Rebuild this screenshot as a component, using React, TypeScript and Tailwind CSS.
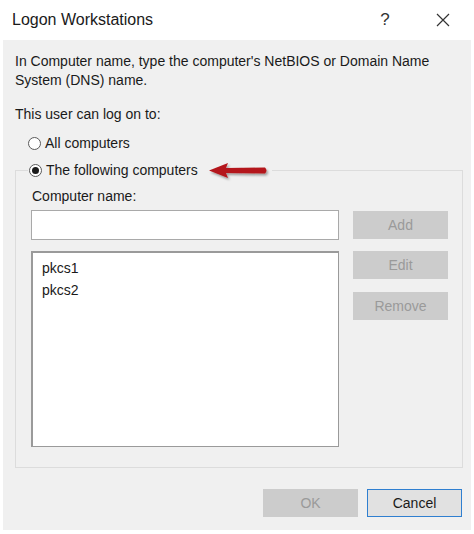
import React from "react";

const font = { fontFamily: '"Liberation Sans", Arial, sans-serif' };

function Radio({ checked }: { checked?: boolean }) {
  return (
    <span className="inline-flex w-[13px] h-[13px] rounded-full border border-[#5a5a5a] bg-white items-center justify-center mr-[4px] shrink-0">
      {checked && <span className="w-[7px] h-[7px] rounded-full bg-[#1a1a1a]" />}
    </span>
  );
}

function Btn({ children, className = "" }: { children: React.ReactNode; className?: string }) {
  return (
    <div
      className={
        "h-[28px] w-[95px] flex items-center justify-center bg-[#cccccc] text-[#9a9a9a] text-[14px] " + className
      }
    >
      {children}
    </div>
  );
}

export default function App() {
  return (
    <div className="w-[474px] h-[534px] bg-white text-[#1a1a1a] overflow-hidden" style={font}>
      <div className="h-[40px] flex items-center pl-[12px] pr-[20px] text-[16px] text-[#1a1a1a]">
        <span className="flex-1">Logon Workstations</span>
        <span className="w-[20px] text-center text-[17px] mr-[41px] text-[#333]">?</span>
        <svg width="14" height="14" viewBox="0 0 14 14" className="mr-[4px]">
          <path d="M1 1 L13 13 M13 1 L1 13" stroke="#333" strokeWidth="1.2" fill="none" />
        </svg>
      </div>
      <div className="mx-[3px] h-[490px] bg-[#f0f0f0] pl-[12px] pr-[9px] pt-[12px] text-[14px] leading-[19px]">
        <p>
          In Computer name, type the computer's NetBIOS or Domain Name
          <br />
          System (DNS) name.
        </p>
        <p className="mt-[15px]">This user can log on to:</p>
        <div className="mt-[10px] flex items-center pl-[13px]">
          <Radio />
          <span>All computers</span>
        </div>
        <fieldset className="mt-[5px] border border-[#dcdcdc] pl-[15px] pr-[14px] pb-[20px] h-[310px]">
          <legend className="ml-[-3px] px-[1px] flex items-center">
            <Radio checked />
            <span>The following computers</span>
            <svg width="64" height="22" viewBox="0 0 64 22" className="ml-[9px] mt-[3px]">
              <defs>
                <filter id="sh" x="-20%" y="-40%" width="140%" height="180%">
                  <feDropShadow dx="1.5" dy="2" stdDeviation="1.3" floodColor="#000" floodOpacity="0.35" />
                </filter>
              </defs>
              <path
                d="M2 9.5 L21 2 L19 7 L58 6.5 Q61 9.5 58 12.5 L19 12 L21 17 Z"
                fill="#b4191c"
                filter="url(#sh)"
              />
            </svg>
          </legend>
          <div className="mt-[4px] pl-[1px]">Computer name:</div>
          <div className="mt-[4px] flex gap-[14px]">
            <div className="flex flex-col gap-[11px]">
              <div className="w-[308px] h-[30px] bg-white border border-[#a9a9a9]" />
              <div className="w-[308px] h-[196px] bg-white border border-[#9a9a9a] border-t-2 border-l-2 pl-[9px] pt-[4px] leading-[22px]">
                <div>pkcs1</div>
                <div>pkcs2</div>
              </div>
            </div>
            <div className="flex flex-col pt-[1px] gap-[12px]">
              <Btn>Add</Btn>
              <Btn>Edit</Btn>
              <Btn className="mt-[1px]">Remove</Btn>
            </div>
          </div>
        </fieldset>
        <div className="mt-[21px] flex justify-end gap-[9px] pr-[0px]">
          <Btn>OK</Btn>
          <div className="h-[28px] w-[95px] flex items-center justify-center bg-[#e1e1e1] border border-[#2f7fd0] text-[14px] text-[#1a1a1a]">
            Cancel
          </div>
        </div>
      </div>
    </div>
  );
}
